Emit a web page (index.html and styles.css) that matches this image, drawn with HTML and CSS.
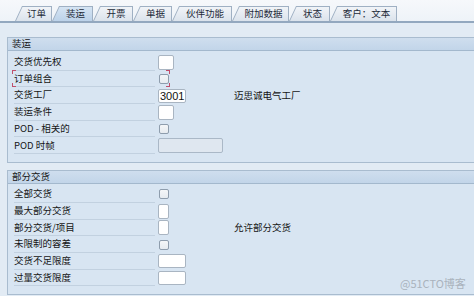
FILE: index.html
```html
<!DOCTYPE html>
<html lang="zh">
<head>
<meta charset="utf-8">
<title>装运</title>
<link rel="stylesheet" href="styles.css">
</head>
<body>
<div class="screen">
  <div class="tabbar">
    <div class="tab w37"><span>订单</span></div>
    <div class="tab w41 active"><span>装运</span></div>
    <div class="tab w40"><span>开票</span></div>
    <div class="tab w39"><span>单据</span></div>
    <div class="tab w60"><span>伙伴功能</span></div>
    <div class="tab w57"><span>附加数据</span></div>
    <div class="tab w41"><span>状态</span></div>
    <div class="tab w67"><span>客户：文本</span></div>
  </div>
  <div class="panel">
    <section class="group g1">
      <div class="ghead">装运</div>
      <div class="gbody">
        <div class="row"><span class="lbl">交货优先权</span><span class="fld"><i class="inp sq"></i></span><span class="desc"></span></div>
        <div class="row focused"><span class="lbl">订单组合</span><span class="fld"><i class="chk"></i></span><span class="desc"></span>
          <span class="focus"><b class="c tl"></b><b class="c tr"></b><b class="c bl"></b><b class="c br"></b></span>
        </div>
        <div class="row"><span class="lbl">交货工厂</span><span class="fld"><i class="inp wide">3001</i></span><span class="desc">迈思诚电气工厂</span></div>
        <div class="row"><span class="lbl">装运条件</span><span class="fld"><i class="inp sq"></i></span><span class="desc"></span></div>
        <div class="row"><span class="lbl">POD - 相关的</span><span class="fld"><i class="chk"></i></span><span class="desc"></span></div>
        <div class="row"><span class="lbl">POD 时帧</span><span class="fld"><i class="inp dis"></i></span><span class="desc"></span></div>
      </div>
    </section>
    <section class="group g2">
      <div class="ghead">部分交货</div>
      <div class="gbody">
        <div class="row"><span class="lbl">全部交货</span><span class="fld"><i class="chk"></i></span><span class="desc"></span></div>
        <div class="row"><span class="lbl">最大部分交货</span><span class="fld"><i class="inp nar"></i></span><span class="desc"></span></div>
        <div class="row"><span class="lbl">部分交货/项目</span><span class="fld"><i class="inp nar"></i></span><span class="desc">允许部分交货</span></div>
        <div class="row"><span class="lbl">未限制的容差</span><span class="fld"><i class="chk"></i></span><span class="desc"></span></div>
        <div class="row"><span class="lbl">交货不足限度</span><span class="fld"><i class="inp med"></i></span><span class="desc"></span></div>
        <div class="row"><span class="lbl">过量交货限度</span><span class="fld"><i class="inp med"></i></span><span class="desc"></span></div>
      </div>
    </section>
  </div>
  <div class="wm">@51CTO博客</div>
</div>
</body>
</html>
```
FILE: styles.css
```css
* { box-sizing: border-box; }
html, body { margin: 0; padding: 0; }
body { background: #e4edf6; }

.screen {
  width: 474px;
  height: 296px;
  position: relative;
  overflow: hidden;
  background: #e2ebf4;
  font-family: "Noto Sans CJK SC", "Noto Sans", sans-serif;
  font-size: 9.5px;
  line-height: 1;
  color: #151515;
}

/* ---------- tabs ---------- */
.tabbar {
  height: 23px;
  display: flex;
  align-items: flex-end;
  padding-left: 15px;
  background: linear-gradient(#f6f8fb, #eef3f8);
  border-bottom: 2px solid #93a8bf;
}
.tab {
  height: 15px;
  padding: 1px 1px 0 1px;
  background: #9fb0c3;
  clip-path: polygon(7px 0, 100% 0, 100% 100%, 0 100%);
}
.tab span {
  display: flex;
  height: 100%;
  align-items: center;
  justify-content: center;
  padding-left: 6px;
  background: linear-gradient(#f1f4f8, #dbe3ec);
  clip-path: polygon(6.5px 0, 100% 0, 100% 100%, 0 100%);
  color: #1d2a38;
  white-space: nowrap;
}
.tab.active span { background: linear-gradient(#d5e4f3, #bcd2e9); }
.w37 { width: 37px; }
.w39 { width: 39px; }
.w40 { width: 40px; }
.w41 { width: 41px; }
.w57 { width: 57px; }
.w60 { width: 60px; }
.w67 { width: 67px; }

/* ---------- panel / groups ---------- */
.panel {
  padding: 14px 0 0 7px;
  display: flex;
  flex-direction: column;
  gap: 7px;
}
.group {
  margin-right: -4px;
  border: 1px solid #a9bccf;
  background: #d8e5f2;
}
.ghead {
  height: 13px;
  display: flex;
  align-items: center;
  padding-left: 4px;
  background: linear-gradient(#cfdeee, #c2d5e9);
  border-bottom: 1px solid #a3b8cd;
}
.gbody {
  padding: 3px 0 8px 6px;
}
.g2 .gbody { padding-top: 2px; }

.row {
  position: relative;
  height: 16.7px;
  display: grid;
  grid-template-columns: 143px 77px 1fr;
  align-items: stretch;
}
.lbl {
  margin-right: 2px;
  display: flex;
  align-items: center;
  border-bottom: 1px solid #c2d1e0;
  white-space: nowrap;
}
.fld {
  display: flex;
  align-items: center;
  padding-left: 1px;
}
.desc {
  display: flex;
  align-items: center;
  white-space: nowrap;
}

/* ---------- inputs ---------- */
.inp {
  display: block;
  height: 15px;
  background: #fff;
  border: 1px solid #a9b5c2;
  border-radius: 2px;
  font-style: normal;
  font-family: "Liberation Sans", Arial, sans-serif;
  font-size: 11px;
  line-height: 13px;
  padding-left: 1px;
  color: #111;
}
.inp.sq { width: 16px; }
.inp.wide { width: 28px; height: 14px; line-height: 12px; }
.inp.nar { width: 11px; }
.inp.med { width: 28px; height: 14px; }
.inp.dis { width: 65px; background: #dfe7f0; border-color: #aab8c7; }

.chk {
  display: block;
  width: 10px;
  height: 10px;
  margin-left: 1px;
  border: 1px solid #8e9dad;
  border-radius: 2px;
  background: linear-gradient(#f4f6f8, #e6ebf0);
}

/* ---------- focus brackets ---------- */
.focus {
  position: absolute;
  left: -2px;
  top: -1px;
  width: 158px;
  height: 17.5px;
  pointer-events: none;
}
.c {
  position: absolute;
  width: 4px;
  height: 4px;
  border-color: #c04f6c;
  border-style: solid;
  border-width: 0;
}
.tl { left: 0; top: 0; border-left-width: 1px; border-top-width: 1px; }
.tr { right: 0; top: 0; border-right-width: 1px; border-top-width: 1px; }
.bl { left: 0; bottom: 0; border-left-width: 1px; border-bottom-width: 1px; }
.br { right: 0; bottom: 0; border-right-width: 1px; border-bottom-width: 1px; }

/* ---------- watermark ---------- */
.wm {
  position: absolute;
  left: 400px;
  top: 278px;
  font-size: 11px;
  color: #aab3bd;
  white-space: nowrap;
}
```
